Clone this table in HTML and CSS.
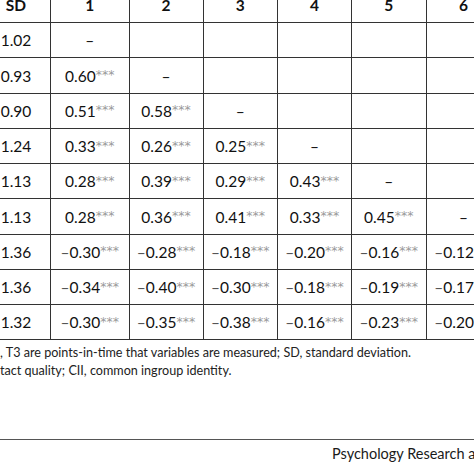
FILE: index.html
```html
<!DOCTYPE html>
<html>
<head>
<meta charset="utf-8">
<link rel="stylesheet" href="styles.css">
</head>
<body>
<div class="page">
  <div class="grid">
    <div class="c h first">SD</div><div class="c h">1</div><div class="c h">2</div><div class="c h">3</div><div class="c h">4</div><div class="c h">5</div><div class="c h">6</div>

    <div class="c first">1.02</div><div class="c">–</div><div class="c"></div><div class="c"></div><div class="c"></div><div class="c"></div><div class="c"></div>

    <div class="c first">0.93</div><div class="c">0.60<span class="s">***</span></div><div class="c">–</div><div class="c"></div><div class="c"></div><div class="c"></div><div class="c"></div>

    <div class="c first">0.90</div><div class="c">0.51<span class="s">***</span></div><div class="c">0.58<span class="s">***</span></div><div class="c">–</div><div class="c"></div><div class="c"></div><div class="c"></div>

    <div class="c first">1.24</div><div class="c">0.33<span class="s">***</span></div><div class="c">0.26<span class="s">***</span></div><div class="c">0.25<span class="s">***</span></div><div class="c">–</div><div class="c"></div><div class="c"></div>

    <div class="c first">1.13</div><div class="c">0.28<span class="s">***</span></div><div class="c">0.39<span class="s">***</span></div><div class="c">0.29<span class="s">***</span></div><div class="c">0.43<span class="s">***</span></div><div class="c">–</div><div class="c"></div>

    <div class="c first">1.13</div><div class="c">0.28<span class="s">***</span></div><div class="c">0.36<span class="s">***</span></div><div class="c">0.41<span class="s">***</span></div><div class="c">0.33<span class="s">***</span></div><div class="c">0.45<span class="s">***</span></div><div class="c">–</div>

    <div class="c first">1.36</div><div class="c"><span class="m">–</span>0.30<span class="s">***</span></div><div class="c"><span class="m">–</span>0.28<span class="s">***</span></div><div class="c"><span class="m">–</span>0.18<span class="s">***</span></div><div class="c"><span class="m">–</span>0.20<span class="s">***</span></div><div class="c"><span class="m">–</span>0.16<span class="s">***</span></div><div class="c"><span class="m">–</span>0.12<span class="s">***</span></div>

    <div class="c first">1.36</div><div class="c"><span class="m">–</span>0.34<span class="s">***</span></div><div class="c"><span class="m">–</span>0.40<span class="s">***</span></div><div class="c"><span class="m">–</span>0.30<span class="s">***</span></div><div class="c"><span class="m">–</span>0.18<span class="s">***</span></div><div class="c"><span class="m">–</span>0.19<span class="s">***</span></div><div class="c"><span class="m">–</span>0.17<span class="s">***</span></div>

    <div class="c first">1.32</div><div class="c"><span class="m">–</span>0.30<span class="s">***</span></div><div class="c"><span class="m">–</span>0.35<span class="s">***</span></div><div class="c"><span class="m">–</span>0.38<span class="s">***</span></div><div class="c"><span class="m">–</span>0.16<span class="s">***</span></div><div class="c"><span class="m">–</span>0.23<span class="s">***</span></div><div class="c"><span class="m">–</span>0.20<span class="s">***</span></div>
  </div>

  <div class="notes">
    <div class="line">, T3 are points-in-time that variables are measured; SD, standard deviation.</div>
    <div class="line">tact quality; CII, common ingroup identity.</div>
  </div>

  <div class="footer">
    <div class="journal">Psychology Research and Behavior Management</div>
  </div>
</div>
</body>
</html>
```

FILE: styles.css
```css
html, body {
  margin: 0;
  padding: 0;
  background: #ffffff;
}

body {
  width: 474px;
  height: 474px;
  overflow: hidden;
  font-family: Lato, "Open Sans", "Liberation Sans", sans-serif;
  color: #111111;
}

.page {
  width: 474px;
  height: 474px;
  overflow: hidden;
}

.grid {
  display: grid;
  grid-template-columns: 68px 77.5px 73px 73.5px 73px 73.5px 74px;
  grid-auto-rows: 34.26px;
  gap: 1px;
  background: #333333;
  padding-bottom: 1px;
  margin-left: -18px;
  margin-top: -12.06px;
  width: max-content;
}

.c {
  background: #ffffff;
  display: flex;
  align-items: center;
  justify-content: center;
  font-size: 15.5px;
  white-space: nowrap;
}

.c.h {
  font-weight: 700;
}

.s {
  font-family: "DejaVu Sans", sans-serif;
  font-size: 12.5px;
  color: #9a9a9a;
  position: relative;
  top: -1px;
}

.m {
  color: #555555;
}

.notes {
  margin-top: 4px;
  font-size: 12.6px;
  line-height: 17.5px;
  color: #222222;
}

.line {
  white-space: nowrap;
}

.footer {
  margin-top: 60px;
  border-top: 1px solid #555555;
  padding-left: 332px;
}

.journal {
  white-space: nowrap;
  font-size: 14.5px;
  line-height: 17px;
  padding-top: 5px;
  color: #1a1a1a;
}
```
